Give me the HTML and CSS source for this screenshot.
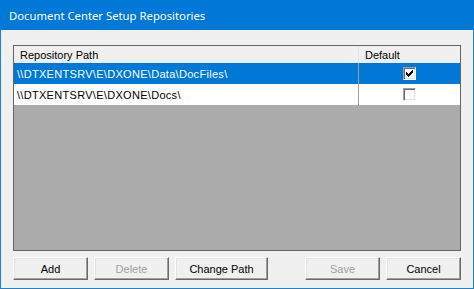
FILE: index.html
```html
<!DOCTYPE html>
<html>
<head>
<meta charset="utf-8">
<link rel="stylesheet" href="styles.css">
</head>
<body>
<div class="window">
  <div class="titlebar">Document Center Setup Repositories</div>
  <div class="content">
    <div class="listview">
      <div class="row header">
        <div class="cell c1">Repository Path</div>
        <div class="cell c2 left">Default</div>
      </div>
      <div class="row selected">
        <div class="cell c1 path">\\DTXENTSRV\E\DXONE\Data\DocFiles\</div>
        <div class="cell c2"><span class="check"><svg width="7" height="7" viewBox="0 0 7 7"><path d="M0 2h1v1h1v1h1v-1h1v-1h1v-1h1v-1h1v3h-1v1h-1v1h-1v1h-1v1h-1v-1h-1v-1h-1z" fill="#000"/></svg></span></div>
      </div>
      <div class="row">
        <div class="cell c1 path">\\DTXENTSRV\E\DXONE\Docs\</div>
        <div class="cell c2"><span class="check"></span></div>
      </div>
      <div class="empty"></div>
    </div>
    <div class="buttons">
      <div class="btn">Add</div>
      <div class="btn disabled">Delete</div>
      <div class="btn wide">Change Path</div>
      <div class="spacer"></div>
      <div class="btn disabled">Save</div>
      <div class="btn">Cancel</div>
    </div>
  </div>
</div>
</body>
</html>
```

FILE: styles.css
```css
html, body {
  margin: 0;
  padding: 0;
  background: #ffffff;
}
.window {
  width: 474px;
  height: 289px;
  box-sizing: border-box;
  border: 1px solid #1883d7;
  background: #f0f0f0;
  display: flex;
  flex-direction: column;
  font-family: "Liberation Sans", Arial, sans-serif;
  font-size: 11px;
  color: #000;
}
.titlebar {
  height: 29px;
  background: #0078d7;
  color: #fff;
  font-family: "Noto Sans", "Open Sans", sans-serif;
  font-size: 11.3px;
  line-height: 29px;
  padding-left: 9px;
  margin: -1px -1px 0 -1px;
  padding-top: 1px;
}
.content {
  flex: 1;
  padding: 15px 12px 0 12px;
  display: flex;
  flex-direction: column;
}
.listview {
  height: 206px;
  box-sizing: border-box;
  border: 1px solid #646464;
  background: #ababab;
  display: flex;
  flex-direction: column;
}
.row {
  display: flex;
  height: 21px;
  background: #fff;
}
.row.header {
  height: 17px;
  background: #f0f0f0;
}
.row.selected {
  background: #0078d7;
  color: #fff;
}
.cell {
  display: flex;
  align-items: center;
  white-space: nowrap;
  overflow: hidden;
}
.c1 {
  width: 345px;
  padding-left: 3px;
  box-sizing: border-box;
  border-right: 1px solid #a0a0a0;
}
.path {
  letter-spacing: 0.3px;
}
.header .c1 {
  padding-left: 6px;
  border-right-color: #e5e5e5;
}
.c2 {
  flex: 1;
  justify-content: center;
}
.c2.left {
  justify-content: flex-start;
  padding-left: 6px;
}
.check {
  width: 13px;
  height: 13px;
  box-sizing: border-box;
  background: #fff;
  border: 1px solid;
  border-color: #a0a0a0 #ffffff #ffffff #a0a0a0;
  box-shadow: inset 1px 1px #696969, inset -1px -1px #e3e3e3;
  display: flex;
  align-items: center;
  justify-content: center;
  margin-left: -1px;
}
.check svg {
  display: block;
}
.empty {
  flex: 1;
}
.buttons {
  display: flex;
  margin-top: 6px;
  gap: 6px;
}
.btn {
  width: 75px;
  height: 23px;
  box-sizing: border-box;
  background: #f0f0f0;
  border: 1px solid;
  border-color: #ffffff #696969 #696969 #ffffff;
  box-shadow: inset -1px -1px #a0a0a0, inset 1px 1px #e3e3e3;
  display: flex;
  align-items: center;
  justify-content: center;
}
.btn.wide {
  width: 93px;
}
.btn.disabled {
  color: #a0a0a0;
}
.spacer {
  flex: 1;
}
```
